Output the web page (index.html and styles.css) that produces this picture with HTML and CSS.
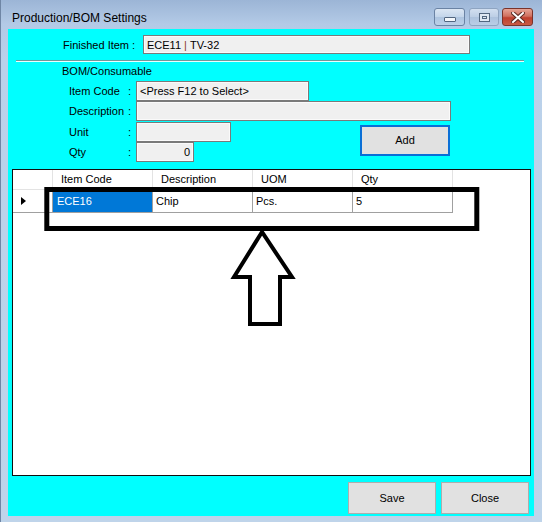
FILE: index.html
```html
<!DOCTYPE html>
<html>
<head>
<meta charset="utf-8">
<title>Production/BOM Settings</title>
<link rel="stylesheet" href="styles.css">
</head>
<body>
<div class="screen">
  <div class="window">
    <div class="titlebar">
      <span class="title">Production/BOM Settings</span>
      <div class="ctrls">
        <div class="wbtn wmin"><span class="minbar"></span></div>
        <div class="wbtn wmax"><span class="maxbox"></span></div>
        <div class="wbtn wclose">
          <svg width="14" height="11" viewBox="0 0 14 11"><path d="M2 1 L12 10 M12 1 L2 10" stroke="#5a2a22" stroke-width="4" stroke-linecap="square"/><path d="M2 1 L12 10 M12 1 L2 10" stroke="#ffffff" stroke-width="2" stroke-linecap="square"/></svg>
        </div>
      </div>
    </div>
    <div class="client">
      <div class="finished-row">
        <span class="lbl lbl-fin">Finished Item</span>
        <span class="colon colon-fin">:</span>
        <div class="field f-fin">ECE11 <span class="pipe">|</span> TV-32</div>
      </div>
      <div class="sep"></div>
      <div class="group-title">BOM/Consumable</div>
      <div class="rows">
        <div class="row"><span class="lbl">Item Code</span><span class="colon">:</span><div class="field f-code">&lt;Press F12 to Select&gt;</div></div>
        <div class="row"><span class="lbl">Description</span><span class="colon">:</span><div class="field f-desc"></div></div>
        <div class="split">
          <div class="subrows">
            <div class="row"><span class="lbl">Unit</span><span class="colon">:</span><div class="field f-unit"></div></div>
            <div class="row"><span class="lbl">Qty</span><span class="colon">:</span><div class="field f-qty">0</div></div>
          </div>
          <div class="btn btn-add">Add</div>
        </div>
      </div>
      <div class="grid">
        <div class="ghead">
          <div class="hc hc-rh"></div>
          <div class="hc">Item Code</div>
          <div class="hc">Description</div>
          <div class="hc">UOM</div>
          <div class="hc">Qty</div>
        </div>
        <div class="grow">
          <div class="dc dc-rh"><span class="tri"></span></div>
          <div class="dc sel">ECE16</div>
          <div class="dc">Chip</div>
          <div class="dc">Pcs.</div>
          <div class="dc">5</div>
        </div>
      </div>
      <div class="footer">
        <div class="btn btn-foot">Save</div>
        <div class="btn btn-foot">Close</div>
      </div>
    </div>
  </div>
  <svg class="annot" width="542" height="522" viewBox="0 0 542 522">
    <rect x="46.8" y="189.5" width="430" height="39" fill="none" stroke="#000" stroke-width="5"/>
    <polygon points="262,232 234,277 250,277 250,324 280,324 280,277 292,277" fill="#fff" stroke="#000" stroke-width="4" stroke-linejoin="miter"/>
  </svg>
</div>
</body>
</html>
```
FILE: styles.css
```css
* { box-sizing: border-box; }
body {
  margin: 0;
  font-family: "Liberation Sans", Arial, sans-serif;
  font-size: 11px;
  color: #000;
}
.screen {
  position: relative;
  width: 542px;
  height: 522px;
  overflow: hidden;
}
.window {
  width: 542px;
  height: 522px;
  display: flex;
  flex-direction: column;
  padding: 0 8px 6px 7px;
  border-left: 1px solid #6f86a5;
  background: linear-gradient(#9cb5d6 0px, #b3cae6 24px, #bad1ea 60px, #bfd4ea 100%);
}
.titlebar {
  height: 29px;
  display: flex;
  align-items: flex-start;
  padding-left: 4px;
}
.title {
  margin-top: 10px;
  font-size: 12px;
  line-height: 16px;
  color: #000;
}
.ctrls {
  margin-left: auto;
  margin-right: 1px;
  margin-top: 8px;
  display: flex;
}
.wbtn {
  width: 31px;
  height: 18px;
  border-radius: 3px;
  display: flex;
  align-items: center;
  justify-content: center;
}
.wmin {
  border: 1px solid #6b83a4;
  background: linear-gradient(#dbe6f3, #c3d5ea 50%, #aec5e0 51%, #bcd0e8);
}
.wmax {
  width: 30px;
  margin-left: 4px;
  border: 1px solid #8ea4c1;
  background: linear-gradient(#d2dff0, #bccee5 50%, #adc2dd 51%, #b9cde6);
}
.wclose {
  margin-left: 3px;
  border: 1px solid #7a332a;
  background: linear-gradient(#e6a496, #d0705f 45%, #bf3f2d 55%, #c85a45);
}
.minbar {
  width: 12px;
  height: 5px;
  margin-top: 5px;
  background: #f4f7fb;
  border: 1px solid #52667f;
  border-radius: 1px;
}
.maxbox {
  width: 11px;
  height: 9px;
  border: 1px solid #52667f;
  background: #dfe8f3;
  box-shadow: inset 0 0 0 2px #dfe8f3, inset 0 0 0 3px #52667f;
}
.client {
  flex: 1;
  background: #00ffff;
  display: flex;
  flex-direction: column;
}
.finished-row {
  display: flex;
  align-items: center;
  margin-top: 6px;
  height: 19px;
  padding-left: 55px;
}
.lbl { display: inline-block; width: 59px; }
.lbl-fin { width: 69px; }
.colon { display: inline-block; width: 8px; }
.colon-fin { width: 11px; }
.field {
  height: 100%;
  background: #f0f0f0;
  border: 1px solid #7a7a7a;
  box-shadow: inset 0 0 0 1px #fafafa;
  padding: 0 3px;
  display: flex;
  align-items: center;
  white-space: nowrap;
}
.f-fin { width: 327px; }
.pipe { color: #8a3a2a; margin: 0 3px; }
.sep {
  margin: 6px 10px 0 8px;
  height: 2px;
  border-top: 1px solid #6e9a9a;
  border-bottom: 1px solid #e8ffff;
}
.group-title {
  margin-top: 3px;
  padding-left: 54px;
  line-height: 13px;
}
.rows {
  margin-top: 3px;
  padding-left: 61px;
  display: flex;
  flex-direction: column;
  gap: 0.33px;
}
.row {
  display: flex;
  align-items: center;
  height: 20px;
}
.f-code { width: 173px; }
.f-desc { width: 315px; }
.f-unit { width: 95px; }
.f-qty { width: 58px; justify-content: flex-end; }
.split {
  display: flex;
  justify-content: space-between;
  align-items: flex-start;
  width: 381px;
}
.subrows {
  display: flex;
  flex-direction: column;
  gap: 0.33px;
}
.btn {
  display: flex;
  align-items: center;
  justify-content: center;
  background: #e1e1e1;
  border: 1px solid #adadad;
  font-size: 11px;
}
.btn-add {
  width: 90px;
  height: 31px;
  margin-top: 3px;
  border: 2px solid #0a6fd6;
}
.grid {
  margin: 7px 3px 0 4px;
  height: 307px;
  background: #fff;
  border: 1px solid #111;
}
.ghead, .grow {
  display: flex;
}
.ghead { height: 20px; }
.grow { height: 23px; }
.hc {
  width: 100px;
  height: 20px;
  border-right: 1px solid #e3e3e3;
  border-bottom: 1px solid #e3e3e3;
  padding-left: 8px;
  display: flex;
  align-items: center;
}
.hc-rh { width: 40px; padding: 0; }
.dc {
  width: 100px;
  height: 23px;
  border-right: 1px solid #a0a0a0;
  border-bottom: 1px solid #a0a0a0;
  padding-left: 3px;
  display: flex;
  align-items: center;
}
.dc-rh { width: 40px; padding-left: 8px; border-right-color: #a0a0a0; }
.sel {
  background: #0078d7;
  color: #fff;
  padding-left: 4px;
}
.tri {
  width: 0;
  height: 0;
  border-top: 4.5px solid transparent;
  border-bottom: 4.5px solid transparent;
  border-left: 5px solid #000;
}
.footer {
  display: flex;
  justify-content: flex-end;
  gap: 5px;
  margin-top: 6px;
  padding-right: 5px;
}
.btn-foot {
  width: 88px;
  height: 32px;
}
.annot {
  position: absolute;
  left: 0;
  top: 0;
  pointer-events: none;
}
```
